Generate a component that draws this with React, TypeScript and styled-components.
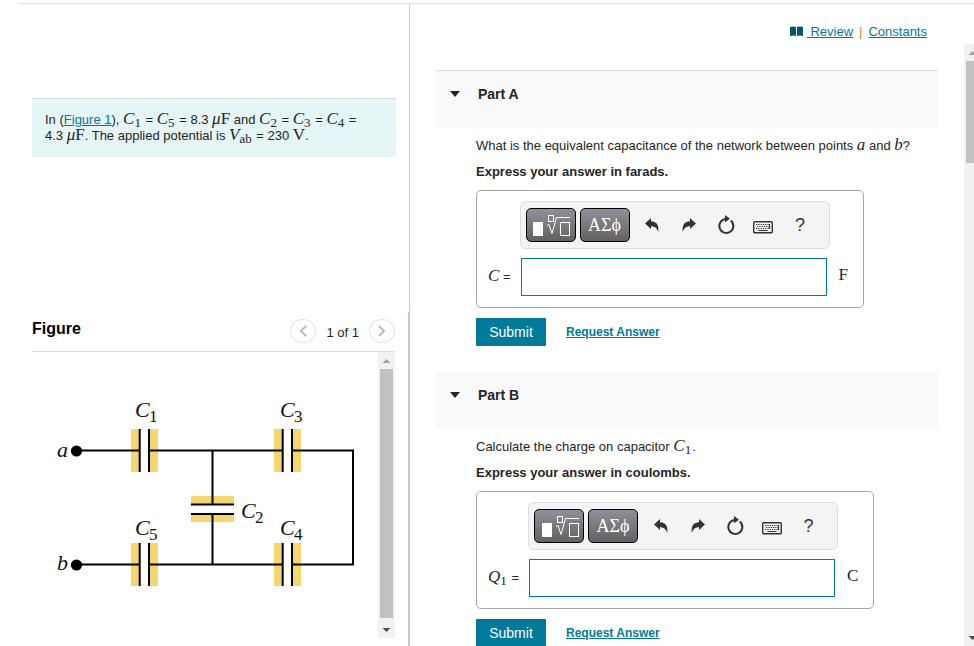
import React from "react";
import styled, { createGlobalStyle } from "styled-components";

const teal = "#007a99";

const GlobalStyle = createGlobalStyle`
  * { box-sizing: border-box; }
  body {
    margin: 0;
    background: #fff;
    color: #252525;
    font: 13px/16px "Liberation Sans", Arial, sans-serif;
  }
  button, input { font-family: inherit; }
  h2, p { margin: 0; }
`;

const Page = styled.div`
  height: 100vh;
  padding-top: 3px;
  display: flex;
  flex-direction: column;
  overflow: hidden;
`;

const TopRule = styled.div`
  flex: none;
  height: 1px;
  margin-left: 19px;
  background: #dcdcdc;
`;

const Columns = styled.div`
  flex: 1;
  min-height: 0;
  display: flex;
`;

const LeftPane = styled.aside`
  flex: 0 0 410px;
  display: flex;
  flex-direction: column;
`;

const PromptArea = styled.section`
  flex: 0 0 308px;
  padding: 94px 13px 0 32px;
  border-right: 1px solid #c3cfe0;
`;

const Prompt = styled.div`
  padding: 13px 12px 13px 13px;
  border-top: 1px solid #d6dcdc;
  background: #e6f5f6;
`;

const TextLink = styled.a`
  color: ${teal};
  text-decoration: underline;
`;

const MathText = styled.span<{ $italic?: boolean }>`
  font-family: "Liberation Serif", "Times New Roman", serif;
  font-size: 17px;
  line-height: 1px;
  font-style: ${(p) => (p.$italic ? "italic" : "normal")};
`;

const Subscript = styled.sub`
  font-family: "Liberation Serif", "Times New Roman", serif;
  font-size: 13px;
  line-height: 1px;
  vertical-align: -3px;
  margin-right: 1px;
`;

const FigureArea = styled.section`
  flex: 1;
  min-height: 0;
  padding: 7px 13px 8px 32px;
  border-right: 2px solid #b9cbe0;
  display: flex;
  flex-direction: column;
`;

const FigureBar = styled.header`
  flex: none;
  height: 33px;
  display: flex;
  justify-content: space-between;
  border-bottom: 1px solid #dcdcdc;
`;

const FigureTitle = styled.h2`
  font-size: 16px;
  line-height: 20px;
  color: #000;
`;

const Pager = styled.div`
  display: flex;
  align-items: center;
  gap: 10px;
  height: 24px;
`;

const PagerButton = styled.button`
  width: 26px;
  height: 24px;
  padding: 0;
  display: grid;
  place-items: center;
  border: 1px solid #e4e4e4;
  border-radius: 50%;
  background: #fff;
`;

const PagerText = styled.span`
  padding-top: 3px;
`;

const FigureView = styled.div`
  flex: 1;
  min-height: 0;
  display: flex;
  justify-content: space-between;
`;

const Circuit = styled.svg`
  display: block;
  flex: none;
`;

const ScrollTrack = styled.div`
  flex: none;
  width: 17px;
  height: 100%;
  display: flex;
  flex-direction: column;
  align-items: center;
  background: #f1f1f1;
`;

const ScrollArrow = styled.svg`
  display: block;
  flex: none;
`;

const ScrollThumb = styled.div<{ $share: string }>`
  width: 13px;
  height: ${(p) => p.$share};
  background: #c1c1c1;
`;

const ScrollRail = styled.div`
  flex: 1;
  min-height: 0;
`;

const RightPane = styled.main`
  flex: 1;
  min-width: 0;
  display: flex;
  flex-direction: column;
`;

const QuickLinks = styled.nav`
  flex: 0 0 40px;
  padding: 20px 47px 0 0;
  display: flex;
  justify-content: flex-end;
`;

const BookIcon = styled.svg`
  margin: 2px 4px 0 0;
`;

const Divider = styled.span`
  margin: 0 6px;
  color: #d08a28;
`;

const ScrollRegion = styled.div`
  flex: 1;
  min-height: 0;
  display: flex;
`;

const Parts = styled.div`
  flex: 1;
  min-width: 0;
  padding: 26px 26px 0;
  overflow: hidden;
`;

const EdgeScroll = styled.div`
  flex: 0 0 10px;
  overflow: hidden;
`;

const PartSection = styled.section`
  padding-bottom: 26px;
`;

const PartHeader = styled.header<{ $ruled?: boolean }>`
  border-top: ${(p) => (p.$ruled ? "1px solid #dcdcdc" : "0")};
  background: #f9f9f9;
  padding: 14px 14px 25px;
`;

const PartToggle = styled.button`
  padding: 0;
  border: 0;
  background: none;
  display: flex;
  align-items: center;
  gap: 18px;
  color: #252525;
  font-size: 14px;
  font-weight: bold;
  line-height: 18px;
`;

const PartBody = styled.div`
  padding: 10px 0 0 40px;
`;

const Instruction = styled.p`
  margin: 10px 0;
  font-weight: bold;
`;

const AnswerBox = styled.div`
  width: fit-content;
  display: grid;
  grid-template-columns: auto 310px auto;
  column-gap: 9px;
  row-gap: 9px;
  align-items: center;
  padding: 10px 15px 11px 11px;
  border: 1px solid #a6a6a6;
  border-radius: 5px;
`;

const Toolbar = styled.div`
  grid-area: 1 / 2;
  height: 48px;
  padding: 0 5px;
  display: flex;
  align-items: center;
  border: 1px solid #dedede;
  border-radius: 6px;
  background: #f4f4f4;
`;

const PaletteButton = styled.button`
  flex: none;
  width: 50px;
  height: 34px;
  margin-right: 4px;
  padding: 0;
  display: grid;
  place-items: center;
  border: 1px solid #000;
  border-radius: 5px;
  background: linear-gradient(#91909a, #626262);
  color: #fff;
  font: 18px/20px "Liberation Serif", serif;
`;

const ToolButton = styled.button`
  flex: none;
  width: 37px;
  height: 34px;
  padding: 0;
  display: grid;
  place-items: center;
  border: 0;
  background: none;
  color: #333;
  font-size: 18px;
  line-height: 20px;
`;

const AnswerLabel = styled.label`
  grid-area: 2 / 1;
  white-space: nowrap;
`;

const AnswerInput = styled.input`
  grid-area: 2 / 2;
  width: 306px;
  height: 38px;
  margin: 0 1px;
  padding: 0 8px;
  border: 1px solid ${teal};
  border-radius: 0;
  outline: 0;
  background: #fff;
  font-size: 16px;
`;

const AnswerUnit = styled(MathText)`
  grid-area: 2 / 3;
  line-height: 20px;
  padding-bottom: 4px;
`;

const Actions = styled.div`
  margin-top: 10px;
  display: flex;
  align-items: center;
  gap: 20px;
`;

const SubmitButton = styled.button`
  width: 70px;
  height: 28px;
  padding: 0;
  border: 0;
  border-radius: 1px;
  background: ${teal};
  color: #fff;
  font-size: 14px;
`;

const RequestLink = styled(TextLink)`
  font-size: 12px;
  font-weight: bold;
`;

function MathVar({ name, sub }: { name: string; sub?: string }) {
  return (
    <>
      <MathText $italic>{name}</MathText>
      {sub && <Subscript>{sub}</Subscript>}
    </>
  );
}

function Arrow({ down }: { down?: boolean }) {
  return (
    <ScrollArrow width="17" height="17" aria-hidden="true">
      <path
        d={down ? "M4.5 7h8l-4 4z" : "M4.5 11h8l-4-4z"}
        fill={down ? "#505050" : "#a3a3a3"}
      />
    </ScrollArrow>
  );
}

function Scrollbar({ share }: { share: string }) {
  return (
    <ScrollTrack aria-hidden="true">
      <Arrow />
      <ScrollRail>
        <ScrollThumb $share={share} />
      </ScrollRail>
      <Arrow down />
    </ScrollTrack>
  );
}

function VerticalCapacitor({ x, y }: { x: number; y: number }) {
  return (
    <g>
      <rect x={x} y={y} width="27" height="43" fill="#f3d66f" />
      <rect x={x + 9} y={y} width="9" height="43" fill="#fff" />
      <path
        d={`M${x + 8.7} ${y}v43M${x + 18} ${y}v43`}
        stroke="#000"
        strokeWidth="2"
      />
      <path
        d={`M${x} ${y + 21.5}h8.7M${x + 18} ${y + 21.5}h9`}
        stroke="#000"
        strokeWidth="2"
      />
    </g>
  );
}

function CircuitLabel(p: { x: number; y: number; name: string; sub?: string }) {
  return (
    <g fontFamily="Liberation Serif, Times New Roman, serif" fill="#111">
      <text x={p.x} y={p.y} fontSize="22" fontStyle="italic">
        {p.name}
      </text>
      {p.sub && (
        <text x={p.x + 14} y={p.y + 5} fontSize="17">
          {p.sub}
        </text>
      )}
    </g>
  );
}

function CircuitDiagram() {
  return (
    <Circuit
      width="346"
      height="286"
      viewBox="0 0 346 286"
      role="img"
      aria-label="Capacitor network between a and b"
    >
      <path
        d="M44 98.5H321V212.5H44M180.5 98.5V212.5"
        fill="none"
        stroke="#000"
        strokeWidth="2"
      />
      <VerticalCapacitor x={99} y={77} />
      <VerticalCapacitor x={242} y={77} />
      <VerticalCapacitor x={99} y={191} />
      <VerticalCapacitor x={242} y={191} />
      <rect x="159" y="144" width="43" height="26" fill="#f3d66f" />
      <rect x="159" y="153" width="43" height="9" fill="#fff" />
      <path
        d="M159 152.5h43M159 162h43M180.5 144v8M180.5 162v8"
        stroke="#000"
        strokeWidth="2"
      />
      <circle cx="44.5" cy="99" r="5.6" />
      <circle cx="44.5" cy="213" r="5.6" />
      <CircuitLabel x={25} y={105} name="a" />
      <CircuitLabel x={25} y={218} name="b" />
      <CircuitLabel x={103} y={65} name="C" sub="1" />
      <CircuitLabel x={248} y={65} name="C" sub="3" />
      <CircuitLabel x={209} y={166} name="C" sub="2" />
      <CircuitLabel x={103} y={183} name="C" sub="5" />
      <CircuitLabel x={248} y={183} name="C" sub="4" />
    </Circuit>
  );
}

const swoop = "M0 5.5 6 0v3.200c5.200.2 8 3.200 7.300 10.800C12 10 10 8.300 6 8.200V11z";

function AnswerTools() {
  return (
    <Toolbar role="toolbar" aria-label="Equation editor">
      <PaletteButton type="button" aria-label="Templates">
        <svg width="39" height="24" viewBox="0 0 39 24" fill="none" stroke="#fff">
          <rect x="2" y="9" width="10" height="14" fill="#fff" stroke="none" />
          <rect x="17.500" y="2.500" width="5" height="6" />
          <path d="M16 12.500l2-1 3 9 4.500-16H39" />
          <rect x="29.500" y="9.500" width="9" height="13" />
        </svg>
      </PaletteButton>
      <PaletteButton type="button" aria-label="Greek symbols">
        ΑΣϕ
      </PaletteButton>
      <ToolButton type="button" aria-label="Undo">
        <svg width="14" height="15" viewBox="0 0 14 15" fill="currentColor">
          <path d={swoop} />
        </svg>
      </ToolButton>
      <ToolButton type="button" aria-label="Redo">
        <svg width="14" height="15" viewBox="0 0 14 15" fill="currentColor">
          <path d={swoop} transform="matrix(-1 0 0 1 14 0)" />
        </svg>
      </ToolButton>
      <ToolButton type="button" aria-label="Reset">
        <svg width="18" height="20" viewBox="0 0 18 20">
          <path
            d="M9 4A7 7 0 1 0 13.800 5.600"
            fill="none"
            stroke="currentColor"
            strokeWidth="2"
          />
          <path d="M8 0l5 3.800-5 3.500z" fill="currentColor" />
        </svg>
      </ToolButton>
      <ToolButton type="button" aria-label="Keyboard">
        <svg width="20" height="20" viewBox="0 0 20 20" fill="none" stroke="currentColor">
          <rect x="0.700" y="6.700" width="18.600" height="11" rx="1" strokeWidth="1.400" />
          <path d="M3 9.500h14M4 11.500h12M3 13.500h13" strokeDasharray="1.300 1" />
          <path d="M5.500 15.500h9M16.500 9v5" strokeWidth="1.200" />
        </svg>
      </ToolButton>
      <ToolButton type="button" aria-label="Help">
        ?
      </ToolButton>
    </Toolbar>
  );
}

interface PartProps {
  id: string;
  title: string;
  ruled?: boolean;
  question: React.ReactNode;
  instruction: string;
  symbol: React.ReactNode;
  unit: string;
}

function Part(p: PartProps) {
  return (
    <PartSection>
      <PartHeader $ruled={p.ruled}>
        <PartToggle type="button" aria-expanded="true">
          <svg width="10" height="6" aria-hidden="true">
            <path d="M0 0h10L5 6z" fill="#252525" />
          </svg>
          {p.title}
        </PartToggle>
      </PartHeader>
      <PartBody>
        <p>{p.question}</p>
        <Instruction>{p.instruction}</Instruction>
        <AnswerBox>
          <AnswerTools />
          <AnswerLabel htmlFor={p.id}>{p.symbol} =</AnswerLabel>
          <AnswerInput id={p.id} type="text" />
          <AnswerUnit>{p.unit}</AnswerUnit>
        </AnswerBox>
        <Actions>
          <SubmitButton type="button">Submit</SubmitButton>
          <RequestLink href="#request">Request Answer</RequestLink>
        </Actions>
      </PartBody>
    </PartSection>
  );
}

export default function App() {
  return (
    <Page>
      <GlobalStyle />
      <TopRule />
      <Columns>
        <LeftPane>
          <PromptArea>
            <Prompt>
              In (<TextLink href="#figure">Figure 1</TextLink>),{" "}
              <MathVar name="C" sub="1" /> = <MathVar name="C" sub="5" /> = 8.3{" "}
              <MathVar name="μ" />
              <MathText>F</MathText> and <MathVar name="C" sub="2" /> ={" "}
              <MathVar name="C" sub="3" /> = <MathVar name="C" sub="4" /> ={" "}
              <br />
              4.3 <MathVar name="μ" />
              <MathText>F</MathText>. The applied potential is{" "}
              <MathVar name="V" sub="ab" /> = 230 <MathText>V</MathText>.
            </Prompt>
          </PromptArea>
          <FigureArea id="figure">
            <FigureBar>
              <FigureTitle>Figure</FigureTitle>
              <Pager>
                <PagerButton type="button" aria-label="Previous figure">
                  <svg width="8" height="12" fill="none" stroke="#bbb" strokeWidth="2">
                    <path d="M7 1L2 6l5 5" />
                  </svg>
                </PagerButton>
                <PagerText>1 of 1</PagerText>
                <PagerButton type="button" aria-label="Next figure">
                  <svg width="8" height="12" fill="none" stroke="#bbb" strokeWidth="2">
                    <path d="M1 1l5 5-5 5" />
                  </svg>
                </PagerButton>
              </Pager>
            </FigureBar>
            <FigureView>
              <CircuitDiagram />
              <Scrollbar share="99%" />
            </FigureView>
          </FigureArea>
        </LeftPane>
        <RightPane>
          <QuickLinks>
            <BookIcon width="13" height="11" viewBox="0 0 13 11" aria-hidden="true">
              <path d="M0 1q3-1 6 0v9q-3-1-6 0zM7 1q3-1 6 0v9q-3-1-6 0z" fill="#00566b" />
            </BookIcon>
            <TextLink href="#review">&nbsp;Review</TextLink>
            <Divider>|</Divider>
            <TextLink href="#constants">Constants</TextLink>
          </QuickLinks>
          <ScrollRegion>
            <Parts>
              <Part
                id="answer-a"
                title="Part A"
                ruled
                question={
                  <>
                    What is the equivalent capacitance of the network between
                    points <MathVar name="a" /> and <MathVar name="b" />?
                  </>
                }
                instruction="Express your answer in farads."
                symbol={<MathVar name="C" />}
                unit="F"
              />
              <Part
                id="answer-b"
                title="Part B"
                question={
                  <>
                    Calculate the charge on capacitor <MathVar name="C" sub="1" />.
                  </>
                }
                instruction="Express your answer in coulombs."
                symbol={<MathVar name="Q" sub="1" />}
                unit="C"
              />
            </Parts>
            <EdgeScroll>
              <Scrollbar share="18%" />
            </EdgeScroll>
          </ScrollRegion>
        </RightPane>
      </Columns>
    </Page>
  );
}
